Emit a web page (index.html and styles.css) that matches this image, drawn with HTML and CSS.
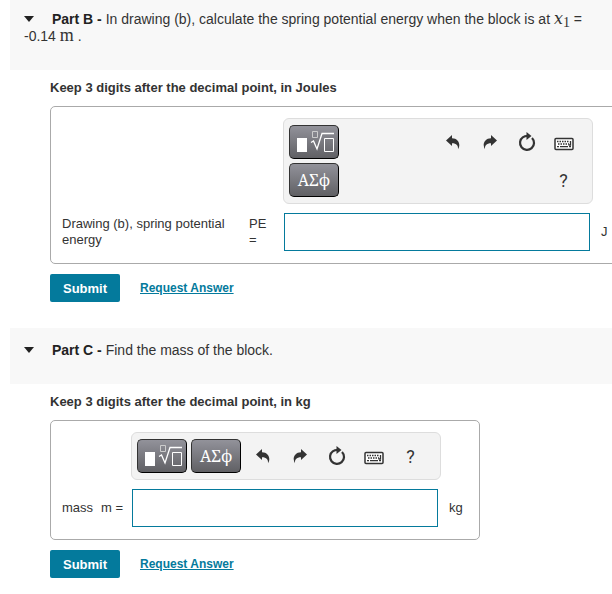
FILE: index.html
```html
<!DOCTYPE html>
<html lang="en">
<head>
    <meta charset="UTF-8">
    <meta name="viewport" content="width=device-width, initial-scale=1.0">
    <title>Spring Potential Energy</title>
    <link rel="stylesheet" href="styles.css">
</head>
<body>

    <!-- Shared icons -->
    <svg class="sprite" aria-hidden="true">
        <symbol id="icon-template" viewBox="0 0 42 24">
            <rect x="4" y="8" width="10" height="14" fill="#fff"/>
            <path d="M19.5 1.5h5v6h-5z" fill="none" stroke="#ccc"/>
            <path d="M18 12.5l2.500-1.500 3.500 8 5-15.500h12" fill="none" stroke="#fff" stroke-width="1.300"/>
            <path d="M31.500 8.500h9v13h-9z" fill="none" stroke="#fff"/>
        </symbol>
        <symbol id="icon-undo" viewBox="0 0 16 16">
            <path d="M1 6.500L7 1v3.200c4.700 0 7.500 3.300 7.300 7.100-.1 1.600-.6 2.800-1.300 4 .3-3.500-1.300-6-6-6V12z" fill="#333"/>
        </symbol>
        <symbol id="icon-redo" viewBox="0 0 16 16">
            <path d="M15 6.500L9 1v3.200C4.300 4.200 1.500 7.500 1.700 11.300c.1 1.600.6 2.800 1.300 4-.3-3.500 1.300-6 6-6V12z" fill="#333"/>
        </symbol>
        <symbol id="icon-reset" viewBox="0 0 18 20">
            <path d="M14 6a7 7 0 1 1-9-.8C6 4.200 7.500 3.800 10 3.800" fill="none" stroke="#333" stroke-width="2.200"/>
            <path d="M8.500 0l5 4-5 4z" fill="#333"/>
        </symbol>
        <symbol id="icon-keyboard" viewBox="0 0 20 14">
            <rect x="1" y="1.500" width="18" height="11" rx="1" fill="#fff" stroke="#333" stroke-width="1.500"/>
            <path d="M3 4.500h12M4 7h11" stroke="#333" stroke-width="1.500" stroke-dasharray="1.500 1"/>
            <path d="M16.500 4v4h-2M3 9.700h2M6 9.700h8M15 9.700h2" fill="none" stroke="#333" stroke-width="1.300"/>
        </symbol>
    </svg>

    <main class="page">

        <section class="part">
            <h2 class="part-header">
                <button type="button" class="toggle" aria-label="Collapse Part B"></button><strong>Part B -</strong> In drawing (b), calculate the spring potential energy when the block is at <i class="math variable">x</i><sub class="math">1</sub> = -0.14 <span class="math">m</span> .
            </h2>

            <form class="answer">
                <p class="hint">Keep 3 digits after the decimal point, in Joules</p>
                <div class="panel">
                    <div class="toolbar toolbar-stacked">
                        <div class="templates">
                            <button type="button" class="template" aria-label="Templates"><svg width="42" height="24"><use href="#icon-template"/></svg></button>
                            <button type="button" class="template">ΑΣϕ</button>
                        </div>
                        <div class="actions">
                            <button type="button" class="action" aria-label="Undo"><svg width="16" height="16"><use href="#icon-undo"/></svg></button>
                            <button type="button" class="action" aria-label="Redo"><svg width="16" height="16"><use href="#icon-redo"/></svg></button>
                            <button type="button" class="action" aria-label="Reset"><svg width="18" height="20"><use href="#icon-reset"/></svg></button>
                            <button type="button" class="action action-keyboard" aria-label="Keyboard"><svg width="20" height="14"><use href="#icon-keyboard"/></svg></button>
                            <button type="button" class="action">?</button>
                        </div>
                    </div>
                    <label class="name name-long" for="energy">Drawing (b), spring potential energy</label>
                    <span class="quantity">PE =</span>
                    <input type="text" class="field" id="energy" name="energy">
                    <span class="unit">J</span>
                </div>
                <div class="buttons">
                    <button type="submit" class="submit">Submit</button>
                    <a href="#" class="request">Request Answer</a>
                </div>
            </form>
        </section>

        <section class="part">
            <h2 class="part-header">
                <button type="button" class="toggle" aria-label="Collapse Part C"></button><strong>Part C -</strong> Find the mass of the block.
            </h2>

            <form class="answer">
                <p class="hint">Keep 3 digits after the decimal point, in kg</p>
                <div class="panel">
                    <div class="toolbar">
                        <div class="templates">
                            <button type="button" class="template" aria-label="Templates"><svg width="42" height="24"><use href="#icon-template"/></svg></button>
                            <button type="button" class="template">ΑΣϕ</button>
                        </div>
                        <div class="actions">
                            <button type="button" class="action" aria-label="Undo"><svg width="16" height="16"><use href="#icon-undo"/></svg></button>
                            <button type="button" class="action" aria-label="Redo"><svg width="16" height="16"><use href="#icon-redo"/></svg></button>
                            <button type="button" class="action" aria-label="Reset"><svg width="18" height="20"><use href="#icon-reset"/></svg></button>
                            <button type="button" class="action action-keyboard" aria-label="Keyboard"><svg width="20" height="14"><use href="#icon-keyboard"/></svg></button>
                            <button type="button" class="action">?</button>
                        </div>
                    </div>
                    <label class="name" for="mass">mass</label>
                    <span class="quantity">m&nbsp;=</span>
                    <input type="text" class="field" id="mass" name="mass">
                    <span class="unit">kg</span>
                </div>
                <div class="buttons">
                    <button type="submit" class="submit">Submit</button>
                    <a href="#" class="request">Request Answer</a>
                </div>
            </form>
        </section>

    </main>

</body>
</html>
```
FILE: styles.css
```css
* {
    margin: 0;
    padding: 0;
    box-sizing: border-box;
}

body {
    font-family: "Liberation Sans", Arial, sans-serif;
    font-size: 13px;
    line-height: 16px;
    color: #333;
    background-color: #fff;
    overflow-x: hidden;
}

button {
    font-family: inherit;
    border: none;
    cursor: pointer;
}

.sprite {
    display: none;
}

.page {
    margin-top: -3px;
    padding-left: 10px;
}

.part {
    margin-bottom: 26px;
}

/* Part heading */
.part-header {
    padding: 14px 14px 25px;
    background-color: #f8f8f8;
    font-size: 14px;
    font-weight: normal;
    line-height: 17px;
}

.part-header strong {
    color: #222;
}

.toggle {
    width: 10px;
    height: 6px;
    margin-right: 18px;
    vertical-align: 2px;
    background-color: #222;
    clip-path: polygon(0 0, 100% 0, 50% 100%);
}

.math {
    font-family: "Liberation Serif", serif;
    font-size: 18px;
    line-height: 0;
}

.variable {
    font-family: "DejaVu Serif", serif;
    font-size: 16px;
}

sub.math {
    font-size: 14px;
    vertical-align: -3px;
}

/* Answer box */
.answer {
    padding: 10px 0 0 40px;
}

.hint {
    margin-bottom: 10px;
    font-weight: bold;
}

.panel {
    display: grid;
    grid-template-columns: auto auto 310px auto;
    align-items: center;
    gap: 9px 8px;
    width: max-content;
    padding: 11px 16px 12px 11px;
    border: 1px solid #aaa;
    border-radius: 5px;
}

.toolbar {
    grid-column: 3;
    display: flex;
    gap: 3px;
    padding: 6px 5px;
    background-color: #f3f3f3;
    border: 1px solid #ddd;
    border-radius: 6px;
}

.templates {
    display: flex;
    gap: 4px;
}

.template {
    display: flex;
    justify-content: center;
    align-items: center;
    width: 50px;
    height: 34px;
    color: #fff;
    font-family: "Noto Serif", "DejaVu Serif", "Liberation Serif", serif;
    font-size: 16px;
    background: linear-gradient(#92929a, #606064);
    border: 1px solid #333;
    border-right-color: #000;
    border-bottom-color: #000;
    border-radius: 5px;
}

.actions {
    display: flex;
    flex-wrap: wrap;
    row-gap: 4px;
}

.action {
    display: flex;
    justify-content: center;
    align-items: center;
    width: 37px;
    height: 34px;
    color: #333;
    font-family: Roboto, sans-serif;
    font-size: 18px;
    background: none;
}

.action-keyboard {
    padding-top: 4px;
}

.toolbar-stacked {
    justify-content: space-between;
    padding-right: 10px;
}

.toolbar-stacked .templates {
    flex-direction: column;
}

.toolbar-stacked .actions {
    justify-content: flex-end;
    width: 148px;
}

.name {
    grid-column: 1;
}

.name-long {
    width: 179px;
}

.quantity {
    width: min-content;
    min-width: 22px;
}

.name-long + .quantity {
    width: 26px;
}

.field {
    height: 38px;
    margin: 0 3px 0 1px;
    padding: 0 8px;
    font-size: 16px;
    border: 1px solid #047a9c;
}

/* Form buttons */
.buttons {
    display: flex;
    align-items: center;
    gap: 20px;
    margin-top: 10px;
}

.submit {
    width: 70px;
    height: 28px;
    color: #fff;
    font-size: 13px;
    font-weight: bold;
    background-color: #047a9c;
    border-radius: 2px;
}

.request {
    color: #047a9c;
    font-size: 12px;
    font-weight: bold;
}
```
